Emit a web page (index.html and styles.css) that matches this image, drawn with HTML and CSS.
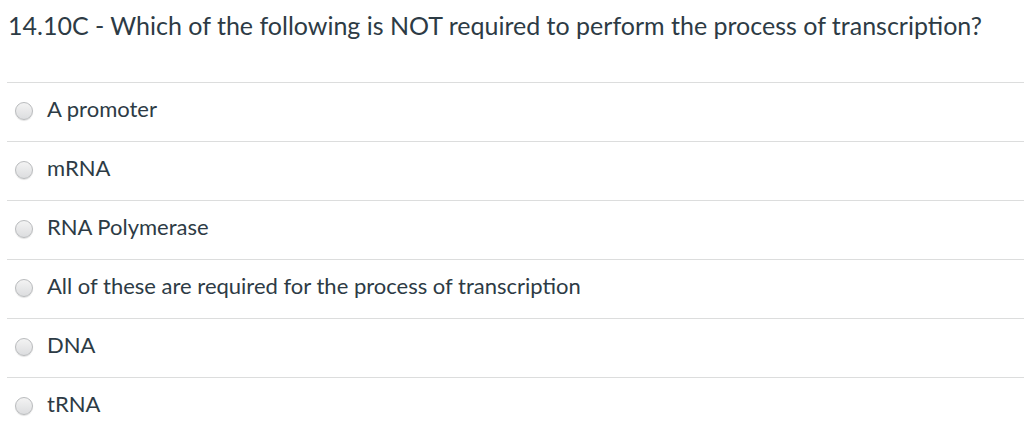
FILE: index.html
```html
<!DOCTYPE html>
<html>
<head>
<meta charset="utf-8">
<link rel="stylesheet" href="styles.css">
</head>
<body>
<div class="quiz">
  <div class="question">14.10C - Which of the following is NOT required to perform the process of transcription?</div>
  <div class="answers">
    <div class="answer"><span class="radio"></span><span class="label">A promoter</span></div>
    <div class="answer"><span class="radio"></span><span class="label">mRNA</span></div>
    <div class="answer"><span class="radio"></span><span class="label">RNA Polymerase</span></div>
    <div class="answer"><span class="radio"></span><span class="label">All of these are required for the process of transcription</span></div>
    <div class="answer"><span class="radio"></span><span class="label">DNA</span></div>
    <div class="answer"><span class="radio"></span><span class="label">tRNA</span></div>
  </div>
</div>
</body>
</html>
```
FILE: styles.css
```css
html, body {
  margin: 0;
  padding: 0;
  background: #ffffff;
}
body {
  font-family: Lato, "Open Sans", sans-serif;
  color: #2d3b45;
}
.quiz {
  padding-left: 7px;
}
.question {
  font-size: 25px;
  line-height: 30px;
  padding: 10px 0 0 1px;
  height: 82px;
  box-sizing: border-box;
}
.answers {
  display: flex;
  flex-direction: column;
}
.answer {
  display: flex;
  align-items: center;
  gap: 14px;
  height: 59px;
  box-sizing: border-box;
  border-top: 1px solid #dcdddd;
  padding-left: 8px;
}
.radio {
  width: 18px;
  height: 18px;
  border-radius: 50%;
  box-sizing: border-box;
  border: 1px solid #b9bbbd;
  background: linear-gradient(#f3f3f3, #dcdddf);
  box-shadow: 0 1px 1px rgba(0,0,0,0.12);
  margin-bottom: 3px;
  flex: none;
}
.label {
  font-size: 22px;
  line-height: 26px;
  margin-bottom: 6px;
}
```
